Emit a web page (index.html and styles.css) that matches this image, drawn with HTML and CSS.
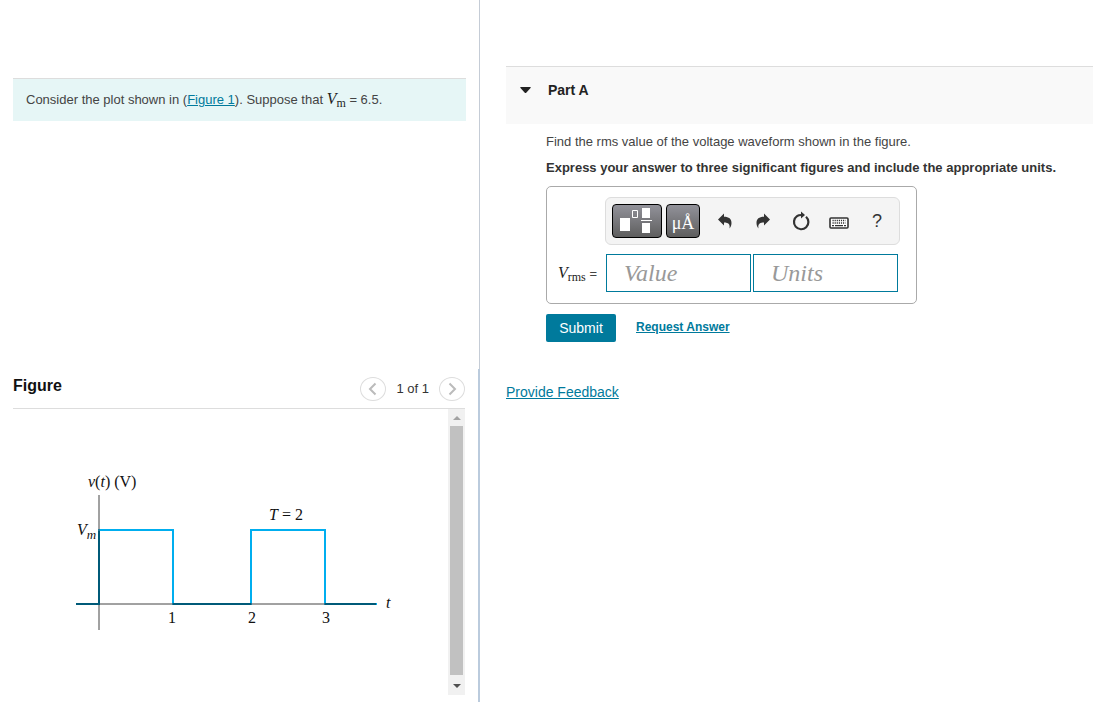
FILE: index.html
```html
<!DOCTYPE html>
<html lang="en">
<head>
    <meta charset="UTF-8">
    <meta name="viewport" content="width=device-width, initial-scale=1.0">
    <title>Part A</title>
    <link rel="stylesheet" href="styles.css">
</head>
<body>

<div class="page">
    <!-- Left side: problem text and figure -->
    <div class="left">
        <div class="problem">
            <p class="intro">Consider the plot shown in (<a href="#figure">Figure 1</a>). Suppose that <span class="math"><i>V</i><sub>m</sub></span> = 6.5.</p>
        </div>

        <div class="figure" id="figure">
            <div class="figure-header">
                <h2>Figure</h2>
                <div class="pager">
                    <button type="button" aria-label="Previous figure">
                        <svg width="12" height="14" viewBox="0 0 12 14"><path d="M8.500 1.500 3 7l5.500 5.500"/></svg>
                    </button>
                    <span>1 of 1</span>
                    <button type="button" aria-label="Next figure">
                        <svg width="12" height="14" viewBox="0 0 12 14"><path d="M3.500 1.500 9 7l-5.500 5.500"/></svg>
                    </button>
                </div>
            </div>
            <div class="figure-body">
                <svg class="plot" width="435" height="286" viewBox="0 0 435 286">
                    <path class="wave" d="M63 195H86V121H160V195H238V121H312V195H364"/>
                    <path class="axis" d="M86 86V221M63 195H363"/>
                    <path class="overlap" d="M63 195H86V122M160 195H238M312 195H363"/>
                    <text x="75" y="78"><tspan class="it">v</tspan>(<tspan class="it">t</tspan>) (V)</text>
                    <text x="64" y="126" class="it">V<tspan class="small" dy="4">m</tspan></text>
                    <text x="256" y="111"><tspan class="it">T</tspan> = 2</text>
                    <text x="155" y="214">1</text>
                    <text x="235" y="214">2</text>
                    <text x="309" y="214">3</text>
                    <text x="373" y="199" class="it">t</text>
                </svg>
                <div class="scrollbar" aria-hidden="true">
                    <svg width="17" height="17" viewBox="0 0 17 17"><path fill="#a3a3a3" d="M5 11h8L9 7z"/></svg>
                    <div class="thumb"></div>
                    <svg width="17" height="20" viewBox="0 0 17 20"><path fill="#505050" d="M5 9h8l-4 4z"/></svg>
                </div>
            </div>
        </div>
    </div>

    <!-- Right side: question part -->
    <div class="right">
        <div class="part-header">
            <svg width="12" height="8" viewBox="0 0 12 8"><path fill="#222" d="M.5 1h10q.5.3 0 1L6 7H5L.5 2Q0 1.300.5 1z"/></svg>
            <h2>Part A</h2>
        </div>

        <form class="part-body" action="#" onsubmit="return false">
            <p>Find the rms value of the voltage waveform shown in the figure.</p>
            <p class="instructions">Express your answer to three significant figures and include the appropriate units.</p>

            <div class="answer">
                <div class="toolbar">
                    <button type="button" class="tool dark templates" aria-label="Templates">
                        <svg width="48" height="32" viewBox="1 1 48 32">
                            <path fill="#fff" d="M8 14h10v13H8zM30 4h8v10h-8zM30 19h8v10h-8zM29 16h11v1H29z"/>
                            <path fill="none" stroke="#fff" d="M20.500 6.500h5v7h-5z"/>
                        </svg>
                    </button>
                    <button type="button" class="tool dark symbols">μÅ</button>
                    <div class="tools">
                        <button type="button" class="tool" aria-label="Undo">
                            <svg width="16" height="16" viewBox="0 0 16 16"><path d="M7 .5v3.300C12 3.800 14.500 6 14.500 10c0 2-.7 4-2 5.500.8-4-.8-6-5.500-6V12.500L1 6.500z"/></svg>
                        </button>
                        <button type="button" class="tool" aria-label="Redo">
                            <svg width="16" height="16" viewBox="0 0 16 16"><path d="M9 .5v3.300C4 3.800 1.500 6 1.500 10c0 2 .7 4 2 5.500-.8-4 .8-6 5.500-6V12.500L15 6.500z"/></svg>
                        </button>
                        <button type="button" class="tool" aria-label="Reset">
                            <svg width="18" height="20" viewBox="0 0 18 20"><path fill="none" stroke="#333" stroke-width="2.200" d="M14 5.700A7.200 7.200 0 1 1 5 5.200Q6.500 4 9.500 4"/><path d="M9 .5v7L13 4z"/></svg>
                        </button>
                        <button type="button" class="tool" aria-label="Keyboard shortcuts">
                            <svg class="keyboard" width="20" height="12" viewBox="0 0 20 12"><rect x="1" y="1" width="18" height="10" rx="1" fill="#fff" stroke="#333" stroke-width="1.600"/><path fill="none" stroke="#333" stroke-width="1.300" stroke-dasharray="1.200 .9" d="M3.500 3.500h13M3.500 6h13"/><path d="M3 8h2v1.200H3zM6 8h8v1.200H6zM15 8h2v1.200h-2z"/></svg>
                        </button>
                        <button type="button" class="tool help">?</button>
                    </div>
                </div>
                <div class="fields">
                    <label for="value"><span class="math"><i>V</i><sub>rms</sub></span> =</label>
                    <input type="text" id="value" placeholder="Value">
                    <input type="text" id="units" placeholder="Units" aria-label="Units">
                </div>
            </div>

            <div class="actions">
                <button type="submit" class="submit">Submit</button>
                <a href="#">Request Answer</a>
            </div>
        </form>

        <a class="feedback" href="#">Provide Feedback</a>
    </div>
</div>

</body>
</html>
```

FILE: styles.css
```css
* {
    box-sizing: border-box;
}
body {
    font-family: "Liberation Sans", Arial, sans-serif;
    font-size: 13px;
    line-height: 16px;
    color: #444;
    background-color: #fff;
    margin: 0;
}
h2, p {
    margin: 0;
}
a {
    color: #007a9c;
}
button {
    font-family: inherit;
    cursor: pointer;
}
.page {
    display: flex;
    min-height: 100vh;
}
.left {
    flex: 0 0 480px;
    display: flex;
    flex-direction: column;
}
.problem {
    height: 369px;
    padding: 78px 13px 0;
    border-right: 1px solid #c5ccd6;
}
.intro {
    padding: 12px 13px 13px;
    border-top: 1px solid #ddd;
    background-color: #e6f6f6;
    line-height: 17px;
}
.math {
    font-family: "Liberation Serif", "Times New Roman", serif;
    font-size: 16px;
    line-height: 16px;
    color: #222;
}
.math sub {
    font-size: 12px;
    line-height: 0;
    vertical-align: -3px;
}

/* Figure */
.figure {
    flex: 1;
    display: flex;
    flex-direction: column;
    padding: 0 13px 7px;
    border-right: 2px solid #bbcbdd;
}
.figure-header {
    display: flex;
    justify-content: space-between;
    height: 40px;
    border-bottom: 1px solid #ddd;
}
.figure-header h2 {
    font-size: 16px;
    line-height: 34px;
    color: #111;
}
.pager {
    display: flex;
    align-items: center;
    gap: 10px;
    font-size: 13px;
    color: #333;
}
.pager button {
    display: flex;
    align-items: center;
    justify-content: center;
    width: 26px;
    height: 24px;
    padding: 0;
    border: 1px solid #ddd;
    border-radius: 50%;
    background-color: #fff;
}
.pager path {
    fill: none;
    stroke: #bbb;
    stroke-width: 2;
}
.figure-body {
    flex: 1;
    display: flex;
    justify-content: space-between;
}
.plot {
    flex: 0 1 auto;
    min-width: 0;
    font-family: "Liberation Serif", "Times New Roman", serif;
    font-size: 16px;
    fill: #111;
}
.plot .it {
    font-style: italic;
}
.plot .small {
    font-size: 13px;
}
.wave {
    fill: none;
    stroke: #00aeef;
    stroke-width: 2;
}
.axis {
    fill: none;
    stroke: #444;
    stroke-width: 1;
}
.overlap {
    fill: none;
    stroke: #005a78;
    stroke-width: 2;
}
.scrollbar {
    display: flex;
    flex-direction: column;
    flex: 0 0 17px;
    background-color: #f1f1f1;
}
.thumb {
    flex: 1;
    margin: 0 2px;
    background-color: #c1c1c1;
}

/* Question */
.right {
    flex: 1;
    min-width: 0;
    padding: 66px 0 0 26px;
}
.part-header {
    display: flex;
    align-items: center;
    gap: 16px;
    height: 58px;
    padding: 0 14px 12px;
    border-top: 1px solid #ddd;
    background-color: #f9f9f9;
}
.part-header h2 {
    font-size: 14px;
    color: #222;
}
.part-body {
    padding: 10px 0 0 40px;
}
.part-body .instructions {
    margin: 10px 0;
    font-weight: bold;
    color: #333;
}
.answer {
    width: 371px;
    max-width: 100%;
    padding: 10px 16px 11px 11px;
    border: 1px solid #aaa;
    border-radius: 5px;
}
.toolbar {
    display: flex;
    align-items: center;
    gap: 4px;
    height: 48px;
    margin-left: 47px;
    padding: 0 6px;
    border: 1px solid #ddd;
    border-radius: 6px;
    background-color: #f4f4f4;
}
.tools {
    display: flex;
    gap: 4px;
    margin-left: 4px;
}
.tool {
    display: flex;
    flex-shrink: 0;
    align-items: center;
    justify-content: center;
    width: 34px;
    height: 34px;
    padding: 0;
    border: none;
    background: none;
    color: #333;
    fill: #333;
}
.dark {
    border: 1px solid #000;
    border-radius: 4px;
    background: linear-gradient(#92929a, #5e5e5e);
    color: #fff;
}
.templates {
    width: 50px;
}
.symbols {
    padding-top: 4px;
    font-family: "Liberation Serif", "Times New Roman", serif;
    font-size: 18px;
}
.keyboard {
    margin-top: 4px;
}
.help {
    font-size: 18px;
}
.fields {
    display: flex;
    align-items: center;
    gap: 2px;
    margin-top: 9px;
}
.fields label {
    width: 46px;
}
.fields input {
    width: 145px;
    height: 38px;
    padding: 0 17px;
    border: 1px solid #007a9c;
    font-family: "Liberation Serif", "Times New Roman", serif;
    font-size: 24px;
    font-style: italic;
}
.fields input::placeholder {
    color: #999;
}
.actions {
    display: flex;
    align-items: center;
    gap: 20px;
    margin-top: 10px;
}
.actions a {
    padding-bottom: 2px;
    font-size: 12px;
    font-weight: bold;
}
.submit {
    width: 70px;
    height: 28px;
    padding: 0;
    border: none;
    border-radius: 2px;
    background-color: #007a9c;
    color: #fff;
    font-size: 14px;
}
.feedback {
    display: inline-block;
    margin-top: 42px;
    font-size: 14px;
}
```
